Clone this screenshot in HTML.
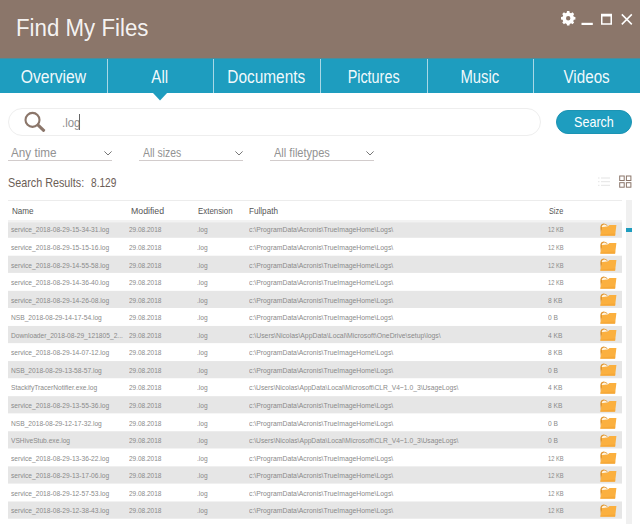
<!DOCTYPE html>
<html><head><meta charset="utf-8"><title>Find My Files</title>
<style>
*{box-sizing:border-box;margin:0;padding:0}
html,body{width:640px;height:524px;overflow:hidden;background:#fff}
body{font-family:"Liberation Sans",sans-serif;position:relative;color:#555}
.abs{position:absolute}
#hdr{position:absolute;left:0;top:0;width:640px;height:58px;background:#8b766a}
#title{position:absolute;left:16px;top:13.5px;font-size:23px;line-height:28px;color:rgba(255,255,255,.93);white-space:nowrap;transform-origin:0 50%;transform:scaleX(.969)}
#tabs{position:absolute;left:0;top:58px;width:640px;height:35px;background:#1e9dbf}
.tab{position:absolute;top:0;height:35px;color:rgba(255,255,255,.96);font-size:17.5px;line-height:39.4px;text-align:center;white-space:nowrap}
.tab span{display:inline-block;transform:scaleX(.92)}
.dv{position:absolute;top:58px;width:1px;height:35px;background:#a9d8e6}
#ptr{position:absolute;left:152px;top:93px;width:0;height:0;border-left:8px solid transparent;border-right:8px solid transparent;border-top:8px solid #1e9dbf}
#sbox{position:absolute;left:8px;top:108px;width:533px;height:28px;border:1px solid #eeeeee;border-radius:14px;background:#fff}
#q{position:absolute;left:61.5px;top:116px;font-size:12px;line-height:14px;color:#8f8f8f;white-space:nowrap;transform-origin:0 50%;transform:scaleX(.95)}
#caret{position:absolute;left:79px;top:114px;width:1px;height:16px;background:#666}
#sbtn{position:absolute;left:556px;top:110px;width:76px;height:24px;border-radius:12px;background:#1e9dbf;border:1px solid #1c93b3;color:#fff;font-size:14.5px;line-height:23.8px;text-align:center}
#sbtn span{display:inline-block;transform:scaleX(.865)}
.f{position:absolute;top:145px;font-size:13px;line-height:16px;color:#929292;white-space:nowrap;transform-origin:0 50%;transform:scaleX(.9)}
.ul{position:absolute;top:160px;height:1px;width:104px;background:#d2cccc}
.chev{position:absolute;top:151px;width:8px;height:5px}
#res{position:absolute;left:8px;top:175px;font-size:13px;line-height:16px;color:#6b5d55;white-space:pre;transform-origin:0 50%;transform:scaleX(.83)}
#topline{position:absolute;left:8px;top:200px;width:614px;height:1px;background:#ececec}
.h{position:absolute;top:206px;font-size:9px;line-height:11px;color:#555;white-space:nowrap;transform-origin:0 50%;transform:scaleX(.9)}
.r{position:absolute;left:8px;width:614px;height:17.556px}
.g{background:#e6e6e6}
.c{position:absolute;top:0.9px;font-size:8px;line-height:17.5px;color:#8a8a8a;white-space:nowrap;transform-origin:0 50%;transform:scaleX(.83)}
.n{left:3px}.m{left:121.4px;transform:scaleX(.81)}.e{left:188.6px}.p{left:241px;transform:scaleX(.855)}.s{left:539.7px}.p.u{transform:scaleX(.84)}.s.w{left:539.7px;transform:scaleX(.72)}
.fd{position:absolute;left:591.5px;top:2.4px;width:17px;height:14px}
#track{position:absolute;left:626px;top:200px;width:6px;height:324px;background:#f0f0f0}
#thumb{position:absolute;left:626px;top:228px;width:6px;height:4px;background:#1e9dbf}
</style></head><body>
<div id="hdr"></div>
<div id="title">Find My Files</div>
<svg class="abs" style="left:560px;top:5px" width="80" height="30" viewBox="0 0 80 30">
 <path fill="#fff" fill-rule="evenodd" d="M13.81 11.81 L15.40 12.10 L15.40 14.50 L13.81 14.79 L13.22 16.21 L14.14 17.54 L12.44 19.24 L11.11 18.32 L9.69 18.91 L9.40 20.50 L7.00 20.50 L6.71 18.91 L5.29 18.32 L3.96 19.24 L2.26 17.54 L3.18 16.21 L2.59 14.79 L1.00 14.50 L1.00 12.10 L2.59 11.81 L3.18 10.39 L2.26 9.06 L3.96 7.36 L5.29 8.28 L6.71 7.69 L7.00 6.10 L9.40 6.10 L9.69 7.69 L11.11 8.28 L12.44 7.36 L14.14 9.06 L13.22 10.39Z M10.40 13.30 A2.2 2.2 0 1 0 6.00 13.30 A2.2 2.2 0 1 0 10.40 13.30Z"/>
 <rect x="21.5" y="17.8" width="11.3" height="2.2" fill="#fff"/>
 <path d="M41 8.8h11v11h-11z M42.5 11.5v6.8h8v-6.8z" fill="#fff" fill-rule="evenodd"/>
 <path d="M61.8 9.4l10 10M71.8 9.4l-10 10" stroke="#fff" stroke-width="1.5" fill="none"/>
</svg>
<div class="abs" style="left:0;top:58px;width:640px;height:1px;background:#4a8d9d;z-index:3"></div>
<div id="tabs">
 <div class="tab" style="left:0;width:107px"><span style="transform:scaleX(0.897)">Overview</span></div>
 <div class="tab" style="left:107px;width:106px"><span style="transform:scaleX(0.86)">All</span></div>
 <div class="tab" style="left:213px;width:107px"><span style="transform:scaleX(0.881)">Documents</span></div>
 <div class="tab" style="left:320px;width:107px"><span style="transform:scaleX(0.822)">Pictures</span></div>
 <div class="tab" style="left:427px;width:106px"><span style="transform:scaleX(0.85)">Music</span></div>
 <div class="tab" style="left:533px;width:107px"><span style="transform:scaleX(0.868)">Videos</span></div>
</div>
<div class="dv" style="left:107px"></div><div class="dv" style="left:213px"></div><div class="dv" style="left:320px"></div><div class="dv" style="left:427px"></div><div class="dv" style="left:533px"></div>
<svg class="abs" style="left:150px;top:92px" width="20" height="10" viewBox="0 0 20 10"><path d="M2.5 0.5h15l-7.5 8z" fill="#1e9dbf"/></svg>
<div id="sbox"></div>
<svg class="abs" style="left:22px;top:109px" width="26" height="26" viewBox="0 0 26 26"><circle cx="10.5" cy="10.9" r="7.0" fill="none" stroke="#8b766a" stroke-width="2.1"/><path d="M16.4 16.4l5.2 4.9" stroke="#8b766a" stroke-width="3.1" stroke-linecap="round"/></svg>
<div id="q">.log</div><div id="caret"></div>
<div id="sbtn"><span>Search</span></div>
<div class="f" style="left:11px">Any time</div><div class="ul" style="left:8px"></div>
<div class="f" style="left:143px;transform:scaleX(.80)">All sizes</div><div class="ul" style="left:139px"></div>
<div class="f" style="left:274px;transform:scaleX(.85)">All filetypes</div><div class="ul" style="left:270px"></div>
<svg class="chev" style="left:104px" viewBox="0 0 8 5"><path d="M.4 .4l3.6 3.6 3.6-3.6" fill="none" stroke="#777" stroke-width="1"/></svg>
<svg class="chev" style="left:235px" viewBox="0 0 8 5"><path d="M.4 .4l3.6 3.6 3.6-3.6" fill="none" stroke="#777" stroke-width="1"/></svg>
<svg class="chev" style="left:366px" viewBox="0 0 8 5"><path d="M.4 .4l3.6 3.6 3.6-3.6" fill="none" stroke="#777" stroke-width="1"/></svg>
<div id="res">Search Results:</div><div id="res" style="left:91px;transform:scaleX(.78)">8.129</div>
<svg class="abs" style="left:598px;top:175px" width="34" height="14" viewBox="0 0 34 14">
 <g fill="#e4e4e4"><rect x="0" y="2.5" width="1.5" height="1"/><rect x="3" y="2.5" width="9" height="1"/><rect x="0" y="6.2" width="1.5" height="1"/><rect x="3" y="6.2" width="9" height="1"/><rect x="0" y="9.8" width="1.5" height="1"/><rect x="3" y="9.8" width="9" height="1"/></g>
 <g fill="none" stroke="#8b766a" stroke-width="1"><rect x="21.7" y="1" width="4.5" height="4.5"/><rect x="28.4" y="1" width="4.5" height="4.5"/><rect x="21.7" y="7.7" width="4.5" height="4.5"/><rect x="28.4" y="7.7" width="4.5" height="4.5"/></g>
</svg>
<div id="topline"></div>
<div class="h" style="left:12px">Name</div><div class="h" style="left:130.5px;transform:scaleX(.97)">Modified</div><div class="h" style="left:197.5px;transform:scaleX(.875)">Extension</div><div class="h" style="left:249px;transform:scaleX(.905)">Fullpath</div><div class="h" style="left:548.7px;transform:scaleX(.81)">Size</div>
<svg class="abs" style="left:0;top:0" width="640" height="524" viewBox="0 0 640 524"><g fill="#e6e6e6"><rect x="8" y="220" width="614" height="2.3" fill="#f2f2f2"/><rect x="8" y="222.2" width="614" height="15.6"/><rect x="8" y="255.71" width="614" height="17.2"/><rect x="8" y="290.82" width="614" height="17.2"/><rect x="8" y="325.94" width="614" height="17.2"/><rect x="8" y="361.05" width="614" height="17.2"/><rect x="8" y="396.16" width="614" height="17.2"/><rect x="8" y="431.27" width="614" height="17.2"/><rect x="8" y="466.38" width="614" height="17.2"/><rect x="8" y="501.5" width="614" height="17.2"/></g></svg>
<div class="r" style="top:220.6px"><span class="c n">service_2018-08-29-15-34-31.log</span><span class="c m">29.08.2018</span><span class="c e">.log</span><span class="c p">c:\ProgramData\Acronis\TrueImageHome\Logs\</span><span class="c s w">12 KB</span><svg class="fd" viewBox="0 0 17 14" width="17" height="14"><path d="M0.35 5.2 Q0.2 0.7 3.6 0.4 Q6.5 0.3 8 3.3 L2.4 4.4 L0.9 12.6 Z" fill="#e0942c"/><path d="M1.6 3.6 Q2.6 1.5 4.5 1.6 Q6.2 1.8 7.4 3.6 L2.4 4.3 Z" fill="#fff4e0"/><path d="M2.4 3.9 L7.4 3.7 L9.5 2 L16.4 2 L15.1 12.8 L0.3 12.8 Z" fill="#fbb03f"/><path d="M0.55 11.4 L15.35 10.5 L15.1 12.8 L0.3 12.8 Z" fill="#f3a332" opacity=".55"/></svg></div>
<div class="r" style="top:238.16px"><span class="c n">service_2018-08-29-15-15-16.log</span><span class="c m">29.08.2018</span><span class="c e">.log</span><span class="c p">c:\ProgramData\Acronis\TrueImageHome\Logs\</span><span class="c s w">12 KB</span><svg class="fd" viewBox="0 0 17 14" width="17" height="14"><path d="M0.35 5.2 Q0.2 0.7 3.6 0.4 Q6.5 0.3 8 3.3 L2.4 4.4 L0.9 12.6 Z" fill="#e0942c"/><path d="M1.6 3.6 Q2.6 1.5 4.5 1.6 Q6.2 1.8 7.4 3.6 L2.4 4.3 Z" fill="#fff4e0"/><path d="M2.4 3.9 L7.4 3.7 L9.5 2 L16.4 2 L15.1 12.8 L0.3 12.8 Z" fill="#fbb03f"/><path d="M0.55 11.4 L15.35 10.5 L15.1 12.8 L0.3 12.8 Z" fill="#f3a332" opacity=".55"/></svg></div>
<div class="r" style="top:255.71px"><span class="c n">service_2018-08-29-14-55-58.log</span><span class="c m">29.08.2018</span><span class="c e">.log</span><span class="c p">c:\ProgramData\Acronis\TrueImageHome\Logs\</span><span class="c s w">12 KB</span><svg class="fd" viewBox="0 0 17 14" width="17" height="14"><path d="M0.35 5.2 Q0.2 0.7 3.6 0.4 Q6.5 0.3 8 3.3 L2.4 4.4 L0.9 12.6 Z" fill="#e0942c"/><path d="M1.6 3.6 Q2.6 1.5 4.5 1.6 Q6.2 1.8 7.4 3.6 L2.4 4.3 Z" fill="#fff4e0"/><path d="M2.4 3.9 L7.4 3.7 L9.5 2 L16.4 2 L15.1 12.8 L0.3 12.8 Z" fill="#fbb03f"/><path d="M0.55 11.4 L15.35 10.5 L15.1 12.8 L0.3 12.8 Z" fill="#f3a332" opacity=".55"/></svg></div>
<div class="r" style="top:273.27px"><span class="c n">service_2018-08-29-14-36-40.log</span><span class="c m">29.08.2018</span><span class="c e">.log</span><span class="c p">c:\ProgramData\Acronis\TrueImageHome\Logs\</span><span class="c s w">12 KB</span><svg class="fd" viewBox="0 0 17 14" width="17" height="14"><path d="M0.35 5.2 Q0.2 0.7 3.6 0.4 Q6.5 0.3 8 3.3 L2.4 4.4 L0.9 12.6 Z" fill="#e0942c"/><path d="M1.6 3.6 Q2.6 1.5 4.5 1.6 Q6.2 1.8 7.4 3.6 L2.4 4.3 Z" fill="#fff4e0"/><path d="M2.4 3.9 L7.4 3.7 L9.5 2 L16.4 2 L15.1 12.8 L0.3 12.8 Z" fill="#fbb03f"/><path d="M0.55 11.4 L15.35 10.5 L15.1 12.8 L0.3 12.8 Z" fill="#f3a332" opacity=".55"/></svg></div>
<div class="r" style="top:290.82px"><span class="c n">service_2018-08-29-14-26-08.log</span><span class="c m">29.08.2018</span><span class="c e">.log</span><span class="c p">c:\ProgramData\Acronis\TrueImageHome\Logs\</span><span class="c s">8 KB</span><svg class="fd" viewBox="0 0 17 14" width="17" height="14"><path d="M0.35 5.2 Q0.2 0.7 3.6 0.4 Q6.5 0.3 8 3.3 L2.4 4.4 L0.9 12.6 Z" fill="#e0942c"/><path d="M1.6 3.6 Q2.6 1.5 4.5 1.6 Q6.2 1.8 7.4 3.6 L2.4 4.3 Z" fill="#fff4e0"/><path d="M2.4 3.9 L7.4 3.7 L9.5 2 L16.4 2 L15.1 12.8 L0.3 12.8 Z" fill="#fbb03f"/><path d="M0.55 11.4 L15.35 10.5 L15.1 12.8 L0.3 12.8 Z" fill="#f3a332" opacity=".55"/></svg></div>
<div class="r" style="top:308.38px"><span class="c n">NSB_2018-08-29-14-17-54.log</span><span class="c m">29.08.2018</span><span class="c e">.log</span><span class="c p">c:\ProgramData\Acronis\TrueImageHome\Logs\</span><span class="c s">0 B</span><svg class="fd" viewBox="0 0 17 14" width="17" height="14"><path d="M0.35 5.2 Q0.2 0.7 3.6 0.4 Q6.5 0.3 8 3.3 L2.4 4.4 L0.9 12.6 Z" fill="#e0942c"/><path d="M1.6 3.6 Q2.6 1.5 4.5 1.6 Q6.2 1.8 7.4 3.6 L2.4 4.3 Z" fill="#fff4e0"/><path d="M2.4 3.9 L7.4 3.7 L9.5 2 L16.4 2 L15.1 12.8 L0.3 12.8 Z" fill="#fbb03f"/><path d="M0.55 11.4 L15.35 10.5 L15.1 12.8 L0.3 12.8 Z" fill="#f3a332" opacity=".55"/></svg></div>
<div class="r" style="top:325.94px"><span class="c n">Downloader_2018-08-29_121805_2...</span><span class="c m">29.08.2018</span><span class="c e">.log</span><span class="c p">c:\Users\Nicolas\AppData\Local\Microsoft\OneDrive\setup\logs\</span><span class="c s">4 KB</span><svg class="fd" viewBox="0 0 17 14" width="17" height="14"><path d="M0.35 5.2 Q0.2 0.7 3.6 0.4 Q6.5 0.3 8 3.3 L2.4 4.4 L0.9 12.6 Z" fill="#e0942c"/><path d="M1.6 3.6 Q2.6 1.5 4.5 1.6 Q6.2 1.8 7.4 3.6 L2.4 4.3 Z" fill="#fff4e0"/><path d="M2.4 3.9 L7.4 3.7 L9.5 2 L16.4 2 L15.1 12.8 L0.3 12.8 Z" fill="#fbb03f"/><path d="M0.55 11.4 L15.35 10.5 L15.1 12.8 L0.3 12.8 Z" fill="#f3a332" opacity=".55"/></svg></div>
<div class="r" style="top:343.49px"><span class="c n">service_2018-08-29-14-07-12.log</span><span class="c m">29.08.2018</span><span class="c e">.log</span><span class="c p">c:\ProgramData\Acronis\TrueImageHome\Logs\</span><span class="c s">8 KB</span><svg class="fd" viewBox="0 0 17 14" width="17" height="14"><path d="M0.35 5.2 Q0.2 0.7 3.6 0.4 Q6.5 0.3 8 3.3 L2.4 4.4 L0.9 12.6 Z" fill="#e0942c"/><path d="M1.6 3.6 Q2.6 1.5 4.5 1.6 Q6.2 1.8 7.4 3.6 L2.4 4.3 Z" fill="#fff4e0"/><path d="M2.4 3.9 L7.4 3.7 L9.5 2 L16.4 2 L15.1 12.8 L0.3 12.8 Z" fill="#fbb03f"/><path d="M0.55 11.4 L15.35 10.5 L15.1 12.8 L0.3 12.8 Z" fill="#f3a332" opacity=".55"/></svg></div>
<div class="r" style="top:361.05px"><span class="c n">NSB_2018-08-29-13-58-57.log</span><span class="c m">29.08.2018</span><span class="c e">.log</span><span class="c p">c:\ProgramData\Acronis\TrueImageHome\Logs\</span><span class="c s">0 B</span><svg class="fd" viewBox="0 0 17 14" width="17" height="14"><path d="M0.35 5.2 Q0.2 0.7 3.6 0.4 Q6.5 0.3 8 3.3 L2.4 4.4 L0.9 12.6 Z" fill="#e0942c"/><path d="M1.6 3.6 Q2.6 1.5 4.5 1.6 Q6.2 1.8 7.4 3.6 L2.4 4.3 Z" fill="#fff4e0"/><path d="M2.4 3.9 L7.4 3.7 L9.5 2 L16.4 2 L15.1 12.8 L0.3 12.8 Z" fill="#fbb03f"/><path d="M0.55 11.4 L15.35 10.5 L15.1 12.8 L0.3 12.8 Z" fill="#f3a332" opacity=".55"/></svg></div>
<div class="r" style="top:378.6px"><span class="c n">StackifyTracerNotifier.exe.log</span><span class="c m">29.08.2018</span><span class="c e">.log</span><span class="c p u">c:\Users\Nicolas\AppData\Local\Microsoft\CLR_V4−1.0_3\UsageLogs\</span><span class="c s">4 KB</span><svg class="fd" viewBox="0 0 17 14" width="17" height="14"><path d="M0.35 5.2 Q0.2 0.7 3.6 0.4 Q6.5 0.3 8 3.3 L2.4 4.4 L0.9 12.6 Z" fill="#e0942c"/><path d="M1.6 3.6 Q2.6 1.5 4.5 1.6 Q6.2 1.8 7.4 3.6 L2.4 4.3 Z" fill="#fff4e0"/><path d="M2.4 3.9 L7.4 3.7 L9.5 2 L16.4 2 L15.1 12.8 L0.3 12.8 Z" fill="#fbb03f"/><path d="M0.55 11.4 L15.35 10.5 L15.1 12.8 L0.3 12.8 Z" fill="#f3a332" opacity=".55"/></svg></div>
<div class="r" style="top:396.16px"><span class="c n">service_2018-08-29-13-55-36.log</span><span class="c m">29.08.2018</span><span class="c e">.log</span><span class="c p">c:\ProgramData\Acronis\TrueImageHome\Logs\</span><span class="c s">8 KB</span><svg class="fd" viewBox="0 0 17 14" width="17" height="14"><path d="M0.35 5.2 Q0.2 0.7 3.6 0.4 Q6.5 0.3 8 3.3 L2.4 4.4 L0.9 12.6 Z" fill="#e0942c"/><path d="M1.6 3.6 Q2.6 1.5 4.5 1.6 Q6.2 1.8 7.4 3.6 L2.4 4.3 Z" fill="#fff4e0"/><path d="M2.4 3.9 L7.4 3.7 L9.5 2 L16.4 2 L15.1 12.8 L0.3 12.8 Z" fill="#fbb03f"/><path d="M0.55 11.4 L15.35 10.5 L15.1 12.8 L0.3 12.8 Z" fill="#f3a332" opacity=".55"/></svg></div>
<div class="r" style="top:413.72px"><span class="c n">NSB_2018-08-29-12-17-32.log</span><span class="c m">29.08.2018</span><span class="c e">.log</span><span class="c p">c:\ProgramData\Acronis\TrueImageHome\Logs\</span><span class="c s">0 B</span><svg class="fd" viewBox="0 0 17 14" width="17" height="14"><path d="M0.35 5.2 Q0.2 0.7 3.6 0.4 Q6.5 0.3 8 3.3 L2.4 4.4 L0.9 12.6 Z" fill="#e0942c"/><path d="M1.6 3.6 Q2.6 1.5 4.5 1.6 Q6.2 1.8 7.4 3.6 L2.4 4.3 Z" fill="#fff4e0"/><path d="M2.4 3.9 L7.4 3.7 L9.5 2 L16.4 2 L15.1 12.8 L0.3 12.8 Z" fill="#fbb03f"/><path d="M0.55 11.4 L15.35 10.5 L15.1 12.8 L0.3 12.8 Z" fill="#f3a332" opacity=".55"/></svg></div>
<div class="r" style="top:431.27px"><span class="c n">VSHiveStub.exe.log</span><span class="c m">29.08.2018</span><span class="c e">.log</span><span class="c p u">c:\Users\Nicolas\AppData\Local\Microsoft\CLR_V4−1.0_3\UsageLogs\</span><span class="c s">0 B</span><svg class="fd" viewBox="0 0 17 14" width="17" height="14"><path d="M0.35 5.2 Q0.2 0.7 3.6 0.4 Q6.5 0.3 8 3.3 L2.4 4.4 L0.9 12.6 Z" fill="#e0942c"/><path d="M1.6 3.6 Q2.6 1.5 4.5 1.6 Q6.2 1.8 7.4 3.6 L2.4 4.3 Z" fill="#fff4e0"/><path d="M2.4 3.9 L7.4 3.7 L9.5 2 L16.4 2 L15.1 12.8 L0.3 12.8 Z" fill="#fbb03f"/><path d="M0.55 11.4 L15.35 10.5 L15.1 12.8 L0.3 12.8 Z" fill="#f3a332" opacity=".55"/></svg></div>
<div class="r" style="top:448.83px"><span class="c n">service_2018-08-29-13-36-22.log</span><span class="c m">29.08.2018</span><span class="c e">.log</span><span class="c p">c:\ProgramData\Acronis\TrueImageHome\Logs\</span><span class="c s w">12 KB</span><svg class="fd" viewBox="0 0 17 14" width="17" height="14"><path d="M0.35 5.2 Q0.2 0.7 3.6 0.4 Q6.5 0.3 8 3.3 L2.4 4.4 L0.9 12.6 Z" fill="#e0942c"/><path d="M1.6 3.6 Q2.6 1.5 4.5 1.6 Q6.2 1.8 7.4 3.6 L2.4 4.3 Z" fill="#fff4e0"/><path d="M2.4 3.9 L7.4 3.7 L9.5 2 L16.4 2 L15.1 12.8 L0.3 12.8 Z" fill="#fbb03f"/><path d="M0.55 11.4 L15.35 10.5 L15.1 12.8 L0.3 12.8 Z" fill="#f3a332" opacity=".55"/></svg></div>
<div class="r" style="top:466.38px"><span class="c n">service_2018-08-29-13-17-06.log</span><span class="c m">29.08.2018</span><span class="c e">.log</span><span class="c p">c:\ProgramData\Acronis\TrueImageHome\Logs\</span><span class="c s w">12 KB</span><svg class="fd" viewBox="0 0 17 14" width="17" height="14"><path d="M0.35 5.2 Q0.2 0.7 3.6 0.4 Q6.5 0.3 8 3.3 L2.4 4.4 L0.9 12.6 Z" fill="#e0942c"/><path d="M1.6 3.6 Q2.6 1.5 4.5 1.6 Q6.2 1.8 7.4 3.6 L2.4 4.3 Z" fill="#fff4e0"/><path d="M2.4 3.9 L7.4 3.7 L9.5 2 L16.4 2 L15.1 12.8 L0.3 12.8 Z" fill="#fbb03f"/><path d="M0.55 11.4 L15.35 10.5 L15.1 12.8 L0.3 12.8 Z" fill="#f3a332" opacity=".55"/></svg></div>
<div class="r" style="top:483.94px"><span class="c n">service_2018-08-29-12-57-53.log</span><span class="c m">29.08.2018</span><span class="c e">.log</span><span class="c p">c:\ProgramData\Acronis\TrueImageHome\Logs\</span><span class="c s w">12 KB</span><svg class="fd" viewBox="0 0 17 14" width="17" height="14"><path d="M0.35 5.2 Q0.2 0.7 3.6 0.4 Q6.5 0.3 8 3.3 L2.4 4.4 L0.9 12.6 Z" fill="#e0942c"/><path d="M1.6 3.6 Q2.6 1.5 4.5 1.6 Q6.2 1.8 7.4 3.6 L2.4 4.3 Z" fill="#fff4e0"/><path d="M2.4 3.9 L7.4 3.7 L9.5 2 L16.4 2 L15.1 12.8 L0.3 12.8 Z" fill="#fbb03f"/><path d="M0.55 11.4 L15.35 10.5 L15.1 12.8 L0.3 12.8 Z" fill="#f3a332" opacity=".55"/></svg></div>
<div class="r" style="top:501.5px"><span class="c n">service_2018-08-29-12-38-43.log</span><span class="c m">29.08.2018</span><span class="c e">.log</span><span class="c p">c:\ProgramData\Acronis\TrueImageHome\Logs\</span><span class="c s w">12 KB</span><svg class="fd" viewBox="0 0 17 14" width="17" height="14"><path d="M0.35 5.2 Q0.2 0.7 3.6 0.4 Q6.5 0.3 8 3.3 L2.4 4.4 L0.9 12.6 Z" fill="#e0942c"/><path d="M1.6 3.6 Q2.6 1.5 4.5 1.6 Q6.2 1.8 7.4 3.6 L2.4 4.3 Z" fill="#fff4e0"/><path d="M2.4 3.9 L7.4 3.7 L9.5 2 L16.4 2 L15.1 12.8 L0.3 12.8 Z" fill="#fbb03f"/><path d="M0.55 11.4 L15.35 10.5 L15.1 12.8 L0.3 12.8 Z" fill="#f3a332" opacity=".55"/></svg></div>
<div id="track"></div><div id="thumb"></div>
</body></html>
